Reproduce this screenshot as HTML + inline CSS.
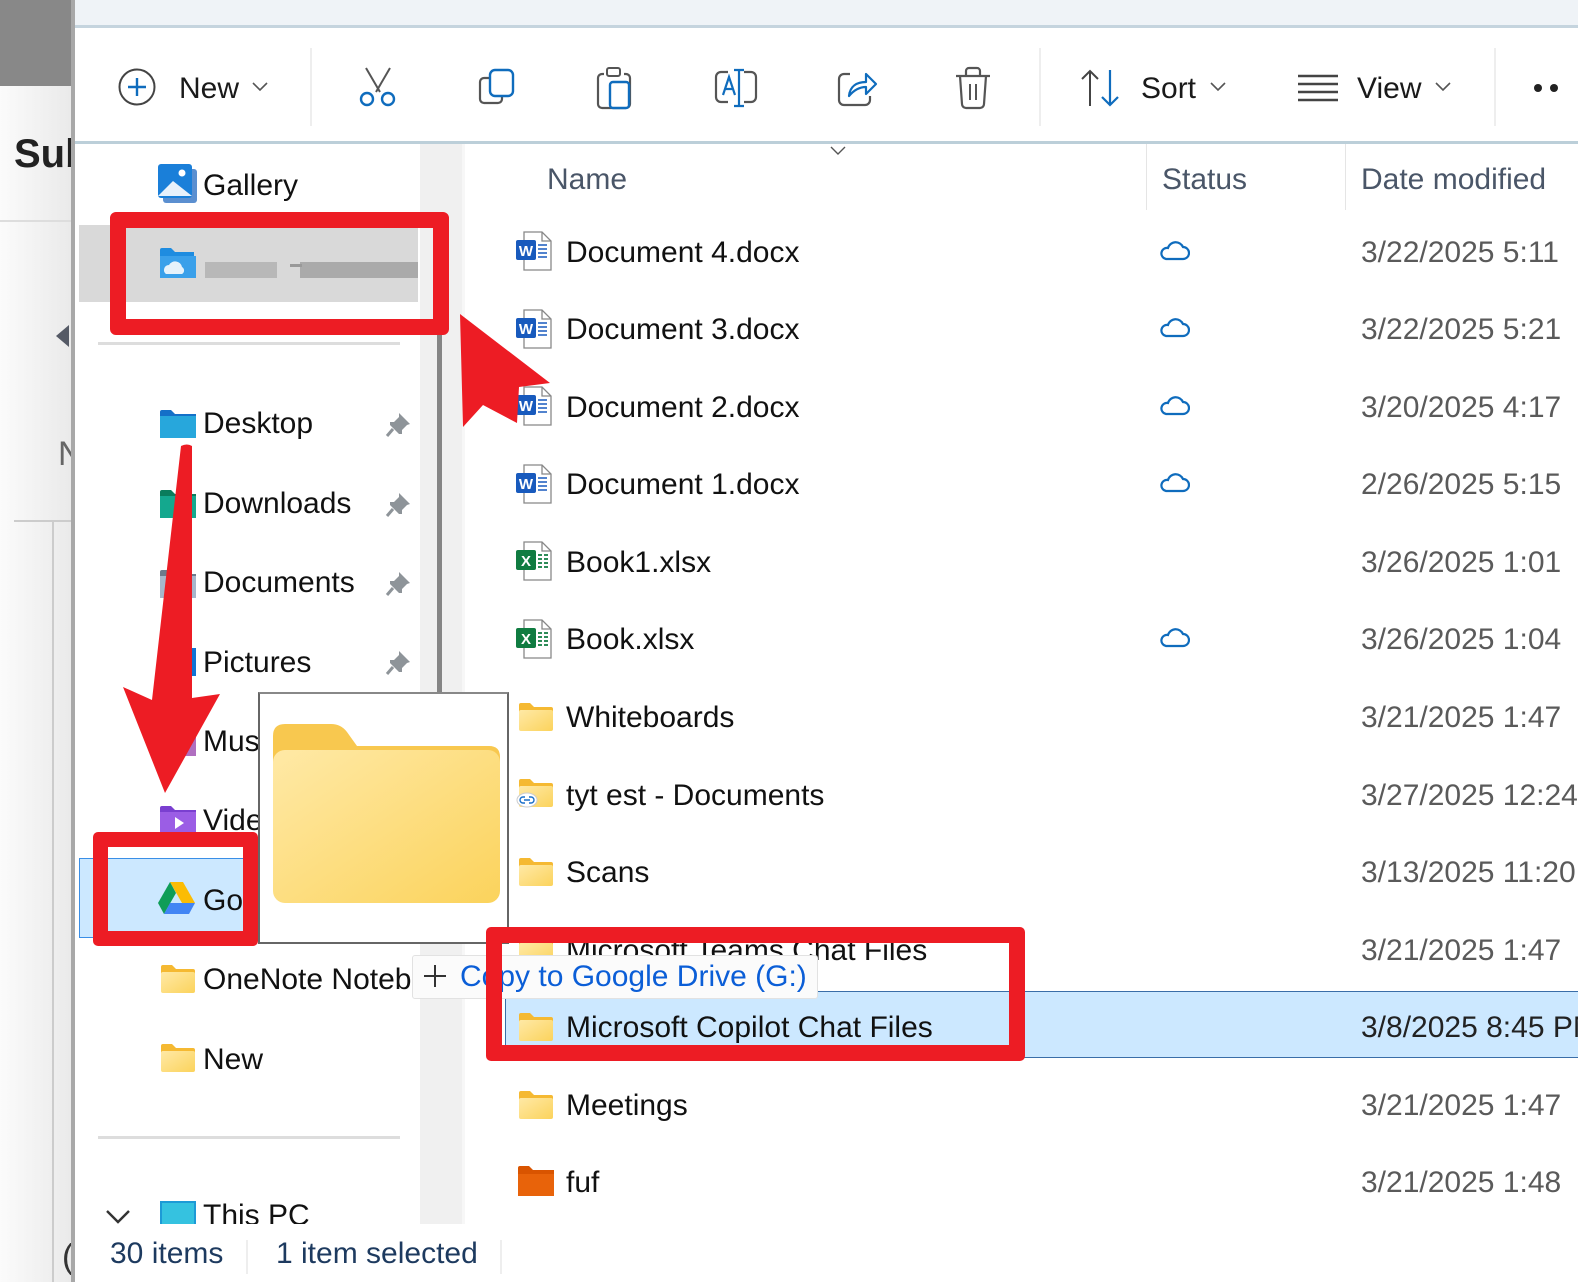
<!DOCTYPE html>
<html><head><meta charset="utf-8"><style>
*{margin:0;padding:0;box-sizing:border-box}
body{width:1578px;height:1282px;overflow:hidden;position:relative;background:#fff;font-family:"Segoe UI","Liberation Sans",sans-serif;color:#000}
.a{position:absolute}
.t{position:absolute;font-size:30px;line-height:40px;white-space:nowrap;color:#111}
.d{position:absolute;font-size:30px;line-height:40px;white-space:nowrap;color:#5a5a5a;left:1361px}
svg{position:absolute;overflow:visible}
</style></head><body>
<svg width="0" height="0" style="position:absolute">
<defs>
<linearGradient id="fg" x1="0" y1="0" x2="1" y2="1"><stop offset="0" stop-color="#ffe9a6"/><stop offset="1" stop-color="#fbd35c"/></linearGradient>
<symbol id="fold" viewBox="0 0 36 30"><path d="M1 3q0-2 2-2h9l4 4h17q2 0 2 2v3H1z" fill="#f5b932"/><rect x="1" y="8" width="34" height="21" rx="2" fill="url(#fg)"/></symbol>
<symbol id="word" viewBox="0 0 36 40"><path d="M8 1h18l9 9v29H8z" fill="#fff" stroke="#888" stroke-width="1.3"/><path d="M26 1v9h9" fill="none" stroke="#888" stroke-width="1.3"/><rect x="0" y="9" width="20" height="20" rx="2" fill="#185abd"/><text x="10" y="25" font-size="15" font-weight="bold" fill="#fff" text-anchor="middle" font-family="Liberation Sans">W</text><path d="M22 14h9M22 18h9M22 22h9M22 26h9" stroke="#185abd" stroke-width="1.6"/></symbol>
<symbol id="xl" viewBox="0 0 36 40"><path d="M8 1h18l9 9v29H8z" fill="#fff" stroke="#888" stroke-width="1.3"/><path d="M26 1v9h9" fill="none" stroke="#888" stroke-width="1.3"/><rect x="0" y="9" width="20" height="20" rx="2" fill="#107c41"/><text x="10" y="25" font-size="15" font-weight="bold" fill="#fff" text-anchor="middle" font-family="Liberation Sans">X</text><path d="M22 14h4M28 14h4M22 18h4M28 18h4M22 22h4M28 22h4M22 26h4M28 26h4" stroke="#107c41" stroke-width="1.8"/></symbol>
<symbol id="cloud" viewBox="0 0 32 24"><path d="M8 21h17a6 6 0 0 0 0-12a8 8 0 0 0-15 1a5.5 5.5 0 0 0-2 11z" fill="none" stroke="#0f6cbd" stroke-width="2.2"/></symbol>
<symbol id="pin" viewBox="0 0 28 28"><path d="M14 3l11 11-3 1-5 5 0 4-3 0-9-9 0-3 4 0 5-5z" fill="#8e9499"/><path d="M8 19l-6 7" stroke="#8e9499" stroke-width="3"/></symbol>
</defs></svg>

<div class="a" style="left:0;top:0;width:75px;height:1282px;background:linear-gradient(90deg,#fbfbfb,#e9e9e9)"></div>
<div class="a" style="left:0;top:0;width:75px;height:86px;background:#888"></div>
<div class="a" style="left:14px;top:132px;font-size:40px;font-weight:bold;color:#222;font-family:'Liberation Sans',sans-serif">Sub</div>
<div class="a" style="left:0;top:220px;width:75px;height:2px;background:#ddd"></div>
<svg style="left:55px;top:323px" width="20" height="26"><path d="M1 13L14 2v22z" fill="#555a66"/></svg>
<div class="a" style="left:58px;top:435px;font-size:34px;color:#666">N</div>
<div class="a" style="left:14px;top:520px;width:61px;height:2px;background:#ccc"></div>
<div class="a" style="left:52px;top:522px;width:2px;height:760px;background:#ccc"></div>
<div class="a" style="left:62px;top:1238px;font-size:34px;color:#333">(</div>
<div class="a" style="left:71px;top:0;width:4px;height:1282px;background:#a8a8a8"></div>

<div class="a" style="left:75px;top:0;width:1503px;height:25px;background:#eff3f7"></div>
<div class="a" style="left:75px;top:25px;width:1503px;height:3px;background:#c5d4de"></div>
<div class="a" style="left:75px;top:28px;width:1503px;height:114px;background:#fff"></div>
<div class="a" style="left:75px;top:141px;width:1503px;height:3px;background:#bccfd9"></div>
<svg style="left:118px;top:68px" width="38" height="38"><circle cx="19" cy="19" r="17.5" fill="none" stroke="#444" stroke-width="2"/><path d="M19 10v18M10 19h18" stroke="#0f6cbd" stroke-width="2.4"/></svg>
<div class="t" style="left:179px;top:69px;color:#1a1a1a">New</div>
<svg style="left:252px;top:82px" width="16" height="10"><path d="M1 1l7 7 7-7" fill="none" stroke="#555" stroke-width="1.6"/></svg>
<div class="a" style="left:310px;top:48px;width:2px;height:78px;background:#eee"></div>
<svg style="left:358px;top:66px" width="40" height="42"><path d="M8 2l14 24M32 2L18 26" stroke="#555" stroke-width="2"/><circle cx="9" cy="33" r="6" fill="none" stroke="#0f6cbd" stroke-width="2.4"/><circle cx="30" cy="33" r="6" fill="none" stroke="#0f6cbd" stroke-width="2.4"/></svg>
<svg style="left:478px;top:68px" width="40" height="38"><rect x="2" y="10" width="22" height="25" rx="4" fill="none" stroke="#555" stroke-width="2.2"/><rect x="12" y="2" width="23" height="26" rx="5" fill="#fff" stroke="#0f6cbd" stroke-width="2.4"/></svg>
<svg style="left:596px;top:66px" width="40" height="44"><path d="M8 8h-2a4 4 0 0 0-4 4v26a4 4 0 0 0 4 4h24a4 4 0 0 0 4-4v-26a4 4 0 0 0-4-4h-2" fill="none" stroke="#555" stroke-width="2.2"/><rect x="11" y="2" width="13" height="8" rx="2" fill="none" stroke="#555" stroke-width="2"/><rect x="14" y="16" width="19" height="26" rx="3" fill="#fff" stroke="#0f6cbd" stroke-width="2.4"/></svg>
<svg style="left:714px;top:68px" width="44" height="40"><path d="M14 4H7a5 5 0 0 0-5 5v20a5 5 0 0 0 5 5h7M30 4h7a5 5 0 0 1 5 5v20a5 5 0 0 1-5 5h-7" fill="none" stroke="#555" stroke-width="2.2"/><path d="M9 27l6-18 6 18M11 21h8" fill="none" stroke="#0f6cbd" stroke-width="2.2"/><path d="M25 2v36M20 2h10M20 38h10" stroke="#0f6cbd" stroke-width="2.2"/></svg>
<svg style="left:836px;top:68px" width="42" height="40"><path d="M14 6H8a5 5 0 0 0-5 5v21a5 5 0 0 0 5 5h21a5 5 0 0 0 5-5v-4" fill="none" stroke="#555" stroke-width="2.2"/><path d="M13 28c1-10 8-14 17-14v-8l10 10-10 10v-7c-7 0-12 3-17 9z" fill="none" stroke="#0f6cbd" stroke-width="2.2" stroke-linejoin="round"/></svg>
<svg style="left:954px;top:66px" width="38" height="44"><path d="M2 10h34M12 10V5a3 3 0 0 1 3-3h8a3 3 0 0 1 3 3v5" fill="none" stroke="#555" stroke-width="2.2"/><path d="M6 10l2 28a4 4 0 0 0 4 4h14a4 4 0 0 0 4-4l2-28" fill="none" stroke="#555" stroke-width="2.2"/><path d="M16 18v16M22 18v16" stroke="#555" stroke-width="2"/></svg>
<div class="a" style="left:1039px;top:48px;width:2px;height:78px;background:#eee"></div>
<svg style="left:1080px;top:68px" width="44" height="40"><path d="M10 38V3M2 11l8-8 8 8" fill="none" stroke="#444" stroke-width="2"/><path d="M30 2v35M22 29l8 8 8-8" fill="none" stroke="#0f6cbd" stroke-width="2.2"/></svg>
<div class="t" style="left:1141px;top:69px;color:#1a1a1a">Sort</div>
<svg style="left:1210px;top:82px" width="16" height="10"><path d="M1 1l7 7 7-7" fill="none" stroke="#555" stroke-width="1.6"/></svg>
<svg style="left:1297px;top:74px" width="42" height="28"><path d="M1 2h40M1 10h40M1 18h40M1 26h40" stroke="#444" stroke-width="2.4"/></svg>
<div class="t" style="left:1357px;top:69px;color:#1a1a1a">View</div>
<svg style="left:1435px;top:82px" width="16" height="10"><path d="M1 1l7 7 7-7" fill="none" stroke="#555" stroke-width="1.6"/></svg>
<div class="a" style="left:1494px;top:48px;width:2px;height:78px;background:#eee"></div>
<svg style="left:1533px;top:82px" width="45" height="12"><circle cx="5" cy="6" r="4" fill="#222"/><circle cx="21" cy="6" r="4" fill="#222"/></svg>

<div class="a" style="left:75px;top:144px;width:345px;height:1080px;background:#fff"></div>
<div class="a" style="left:420px;top:144px;width:42px;height:1080px;background:#f0f0f0"></div>
<div class="a" style="left:437px;top:330px;width:5px;height:362px;background:#858585"></div>
<div class="a" style="left:462px;top:144px;width:3px;height:1080px;background:#f7f7f7"></div>
<svg style="left:158px;top:164px" width="40" height="40"><rect x="5" y="5" width="34" height="34" rx="3" fill="#5b8fd0"/><rect x="0" y="0" width="34" height="34" rx="3" fill="#1a7fd9"/><path d="M0 32L15 17 34 32z" fill="#e8f1fb"/><circle cx="24" cy="9" r="3.5" fill="#fff"/></svg>
<div class="t" style="left:203px;top:166px">Gallery</div>
<div class="a" style="left:79px;top:225px;width:339px;height:77px;background:#d9d9d9"></div>
<svg style="left:160px;top:248px" width="36" height="30"><path d="M0 2q0-2 2-2h9l4 4h19v26H0z" fill="#1e8ce0"/><rect x="0" y="8" width="36" height="22" fill="#3aa0ea"/><path d="M6 26a5 5 0 0 1 3-9a7 7 0 0 1 13 2a4 4 0 0 1 0 7z" fill="#e6f2fb"/></svg>
<div class="a" style="left:205px;top:262px;width:72px;height:16px;background:#aaa;opacity:.7"></div>
<div class="a" style="left:290px;top:264px;width:12px;height:3px;background:#999"></div>
<div class="a" style="left:300px;top:262px;width:118px;height:16px;background:#9a9a9a;opacity:.75"></div>
<div class="a" style="left:98px;top:342px;width:302px;height:3px;background:#ddd"></div>

<svg style="left:160px;top:410px" width="36" height="28"><path d="M0 2q0-2 2-2h9l4 4h21v24H0z" fill="#1470c8"/><rect x="0" y="6" width="36" height="22" fill="#27a7dc"/></svg>
<div class="t" style="left:203px;top:404px">Desktop</div>
<svg style="left:385px;top:410px" width="28" height="28"><use href="#pin"/></svg>
<svg style="left:160px;top:490px" width="36" height="28"><path d="M0 2q0-2 2-2h9l4 4h21v24H0z" fill="#0a7d5c"/><rect x="0" y="6" width="36" height="22" fill="#14a88e"/></svg>
<div class="t" style="left:203px;top:484px">Downloads</div>
<svg style="left:385px;top:490px" width="28" height="28"><use href="#pin"/></svg>
<svg style="left:160px;top:570px" width="36" height="28"><path d="M0 2q0-2 2-2h9l4 4h21v24H0z" fill="#6d7a8c"/><rect x="0" y="6" width="36" height="22" fill="#a7b6cb"/></svg>
<div class="t" style="left:203px;top:563px">Documents</div>
<svg style="left:385px;top:648px" width="28" height="28"><use href="#pin"/></svg>
<svg style="left:385px;top:569px" width="28" height="28"><use href="#pin"/></svg>
<svg style="left:160px;top:648px" width="36" height="28"><rect x="0" y="0" width="36" height="28" fill="#1173d4"/></svg>
<div class="t" style="left:203px;top:643px">Pictures</div>
<svg style="left:160px;top:728px" width="36" height="28"><rect x="0" y="0" width="36" height="28" fill="#b06fc0"/></svg>
<div class="t" style="left:203px;top:722px">Music</div>
<svg style="left:160px;top:806px" width="36" height="28"><path d="M0 2q0-2 2-2h9l4 4h21v24H0z" fill="#7a3fd0"/><rect x="0" y="6" width="36" height="22" fill="#9b5de5"/><path d="M15 11l9 6-9 6z" fill="#fff"/></svg>
<div class="t" style="left:203px;top:801px">Videos</div>
<div class="a" style="left:79px;top:858px;width:340px;height:80px;background:#cce8ff;border:1px solid #3a8ee6"></div>
<svg style="left:158px;top:881px" width="38" height="34"><path d="M12 1h13l12 21h-13z" fill="#fbbc04"/><path d="M12 1L0 22l6 11 12-21z" fill="#0f9d58"/><path d="M6 33h25l6-11H12z" fill="#4285f4"/></svg>
<div class="t" style="left:203px;top:881px">Google Drive (G:)</div>
<svg style="left:160px;top:964px" width="36" height="30"><use href="#fold"/></svg>
<div class="t" style="left:203px;top:960px">OneNote Notebooks</div>
<svg style="left:160px;top:1043px" width="36" height="30"><use href="#fold"/></svg>
<div class="t" style="left:203px;top:1040px">New</div>
<div class="a" style="left:98px;top:1136px;width:302px;height:3px;background:#ddd"></div>
<div class="a" style="left:75px;top:1195px;width:345px;height:35px;overflow:hidden">
 <svg style="left:30px;top:14px" width="26" height="16"><path d="M2 2l11 11 11-11" fill="none" stroke="#333" stroke-width="2.4"/></svg>
 <svg style="left:85px;top:6px" width="36" height="30"><rect x="0" y="0" width="36" height="30" fill="#1d9ad6"/><rect x="2" y="2" width="32" height="26" fill="#35c2e0"/></svg>
 <div class="t" style="left:128px;top:1px">This PC</div>
</div>

<div class="a" style="left:465px;top:144px;width:1113px;height:1080px;background:#fff"></div>
<svg style="left:830px;top:146px" width="16" height="10"><path d="M1 1l7 7 7-7" fill="none" stroke="#555" stroke-width="1.4"/></svg>
<div class="t" style="left:547px;top:160px;color:#4a5668">Name</div>
<div class="a" style="left:1146px;top:144px;width:1px;height:66px;background:#e5e5e5"></div>
<div class="t" style="left:1162px;top:160px;color:#4a5668">Status</div>
<div class="a" style="left:1345px;top:144px;width:1px;height:66px;background:#e5e5e5"></div>
<div class="t" style="left:1361px;top:160px;color:#4a5668">Date modified</div>

<div class="a" style="left:505px;top:991px;width:1073px;height:67px;background:#cce8ff;border-top:1px solid #3a6ea8;border-bottom:1px solid #3a6ea8;border-left:1px solid #3a6ea8"></div>

<svg style="left:516px;top:231px" width="36" height="40"><use href="#word"/></svg>
<div class="t" style="left:566px;top:233px">Document 4.docx</div>
<svg style="left:1158px;top:238px" width="32" height="24"><use href="#cloud"/></svg>
<div class="d" style="top:233px">3/22/2025 5:11</div>
<svg style="left:516px;top:309px" width="36" height="40"><use href="#word"/></svg>
<div class="t" style="left:566px;top:310px">Document 3.docx</div>
<svg style="left:1158px;top:315px" width="32" height="24"><use href="#cloud"/></svg>
<div class="d" style="top:310px">3/22/2025 5:21</div>
<svg style="left:516px;top:386px" width="36" height="40"><use href="#word"/></svg>
<div class="t" style="left:566px;top:388px">Document 2.docx</div>
<svg style="left:1158px;top:393px" width="32" height="24"><use href="#cloud"/></svg>
<div class="d" style="top:388px">3/20/2025 4:17</div>
<svg style="left:516px;top:464px" width="36" height="40"><use href="#word"/></svg>
<div class="t" style="left:566px;top:465px">Document 1.docx</div>
<svg style="left:1158px;top:470px" width="32" height="24"><use href="#cloud"/></svg>
<div class="d" style="top:465px">2/26/2025 5:15</div>
<svg style="left:516px;top:541px" width="36" height="40"><use href="#xl"/></svg>
<div class="t" style="left:566px;top:543px">Book1.xlsx</div>
<div class="d" style="top:543px">3/26/2025 1:01</div>
<svg style="left:516px;top:619px" width="36" height="40"><use href="#xl"/></svg>
<div class="t" style="left:566px;top:620px">Book.xlsx</div>
<svg style="left:1158px;top:625px" width="32" height="24"><use href="#cloud"/></svg>
<div class="d" style="top:620px">3/26/2025 1:04</div>
<svg style="left:518px;top:702px" width="36" height="30"><use href="#fold"/></svg>
<div class="t" style="left:566px;top:698px">Whiteboards</div>
<div class="d" style="top:698px">3/21/2025 1:47</div>
<svg style="left:518px;top:778px" width="36" height="30"><use href="#fold"/></svg>
<svg style="left:516px;top:792px" width="22" height="16"><ellipse cx="11" cy="8" rx="10" ry="7" fill="#fff" stroke="#ccc"/><path d="M8 8h6M9 5h-2a3 3 0 0 0 0 6h2M13 5h2a3 3 0 0 1 0 6h-2" fill="none" stroke="#1a6fc9" stroke-width="1.4"/></svg>
<div class="t" style="left:566px;top:776px">tyt est - Documents</div>
<div class="d" style="top:776px">3/27/2025 12:24</div>
<svg style="left:518px;top:857px" width="36" height="30"><use href="#fold"/></svg>
<div class="t" style="left:566px;top:853px">Scans</div>
<div class="d" style="top:853px">3/13/2025 11:20</div>
<svg style="left:518px;top:935px" width="36" height="30"><use href="#fold"/></svg>
<div class="t" style="left:566px;top:931px">Microsoft Teams Chat Files</div>
<div class="d" style="top:931px">3/21/2025 1:47</div>
<svg style="left:518px;top:1012px" width="36" height="30"><use href="#fold"/></svg>
<div class="t" style="left:566px;top:1008px">Microsoft Copilot Chat Files</div>
<div class="d" style="top:1008px;color:#222">3/8/2025 8:45 PM</div>
<svg style="left:518px;top:1090px" width="36" height="30"><use href="#fold"/></svg>
<div class="t" style="left:566px;top:1086px">Meetings</div>
<div class="d" style="top:1086px">3/21/2025 1:47</div>
<svg style="left:518px;top:1166px" width="36" height="30"><path d="M0 2q0-2 2-2h9l4 4h21v26H0z" fill="#d95400"/><rect x="0" y="8" width="36" height="22" fill="#e8630a"/></svg>
<div class="t" style="left:566px;top:1163px">fuf</div>
<div class="d" style="top:1163px">3/21/2025 1:48</div>

<div class="a" style="left:75px;top:1224px;width:1503px;height:58px;background:#fff"></div>
<div class="t" style="left:110px;top:1234px;color:#1d3a5f">30 items</div>
<div class="a" style="left:246px;top:1240px;width:2px;height:34px;background:#eee"></div>
<div class="t" style="left:276px;top:1234px;color:#1d3a5f">1 item selected</div>
<div class="a" style="left:500px;top:1240px;width:2px;height:34px;background:#eee"></div>

<div class="a" style="left:258px;top:692px;width:251px;height:252px;background:#fff;border:2px solid #666;border-top-color:#888"></div>
<svg style="left:273px;top:724px" width="227" height="180"><path d="M0 12q0-12 12-12h46q10 0 16 8l10 14h132q11 0 11 11v20H0z" fill="#f8c84f"/><rect x="0" y="26" width="227" height="153" rx="12" fill="url(#fg)"/></svg>
<div class="a" style="left:412px;top:955px;width:406px;height:44px;background:#fbfbfb;border:1px solid #e2e2e2;border-radius:3px"></div>
<svg style="left:423px;top:964px" width="24" height="24"><path d="M12 1v22M1 12h22" stroke="#333" stroke-width="2"/></svg>
<div class="a" style="left:460px;top:957px;font-size:30px;line-height:40px;color:#0b5ed7;white-space:nowrap">Copy to Google Drive (G:)</div>

<div class="a" style="left:110px;top:212px;width:339px;height:123px;border:16px solid #ed1c24;border-radius:6px"></div>
<div class="a" style="left:93px;top:832px;width:165px;height:114px;border:15px solid #ed1c24;border-radius:5px"></div>
<div class="a" style="left:486px;top:927px;width:539px;height:134px;border:16px solid #ed1c24;border-radius:5px"></div>
<svg style="left:0;top:0" width="1578" height="1282"><path d="M460 314L550 383 519 387 517 423 483 405 463 427z" fill="#ed1c24"/><path d="M181 446q6-3 11 0L192 698 220 694 165 793 123 687 152 700z" fill="#ed1c24"/></svg>
</body></html>
